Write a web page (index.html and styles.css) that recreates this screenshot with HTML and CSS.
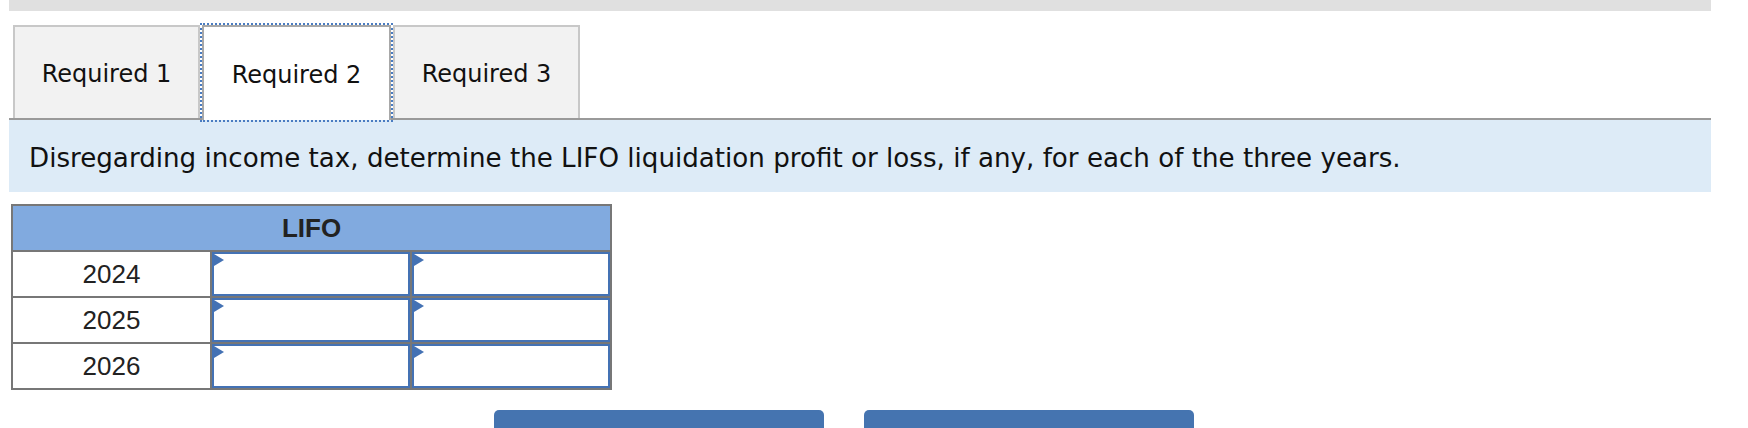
FILE: index.html
```html
<!DOCTYPE html>
<html>
<head>
<link rel="stylesheet" href="styles.css">
</head>
<body>

<div class="page">
    <div class="top-bar"></div>

    <div class="tabs">
        <div class="tab">Required 1</div>
        <div class="tab active">Required 2</div>
        <div class="tab">Required 3</div>
    </div>

    <div class="question">Disregarding income tax, determine the LIFO liquidation profit or loss, if any, for each of the three years.</div>

    <table class="answer-table">
        <tr>
            <th colspan="3">LIFO</th>
        </tr>
        <tr>
            <td class="year">2024</td>
            <td><div class="entry"><span class="marker"></span></div></td>
            <td><div class="entry"><span class="marker"></span></div></td>
        </tr>
        <tr>
            <td class="year">2025</td>
            <td><div class="entry"><span class="marker"></span></div></td>
            <td><div class="entry"><span class="marker"></span></div></td>
        </tr>
        <tr>
            <td class="year">2026</td>
            <td><div class="entry"><span class="marker"></span></div></td>
            <td><div class="entry"><span class="marker"></span></div></td>
        </tr>
    </table>

    <div class="nav-buttons">
        <div class="nav-btn"></div>
        <div class="nav-btn"></div>
    </div>
</div>

</body>
</html>
```

FILE: styles.css
```css
body {
    margin: 0;
    background-color: #fff;
    font-family: "DejaVu Sans", Verdana, sans-serif;
    color: #111;
    overflow: hidden;
}

.page {
    width: 1702px;
    margin-left: 9px;
}

.top-bar {
    height: 11px;
    background-color: #e0e0e0;
}

/* Tabs */
.tabs {
    display: flex;
    margin-top: 14px;
    padding-left: 4px;
    border-bottom: 2px solid #9a9a9a;
}

.tab {
    box-sizing: border-box;
    width: 187px;
    height: 93px;
    padding-top: 3px;
    display: flex;
    align-items: center;
    justify-content: center;
    background-color: #f2f2f2;
    border: 2px solid #c8c8c8;
    border-bottom: none;
    font-size: 24px;
}

.tab.active {
    width: 189px;
    height: 95px;
    margin: 0 2px -2px 2px;
    background-color: #fff;
    border-color: #a8a8a8;
    outline: 2px dotted #4a7cc1;
}

/* Question text */
.question {
    height: 72px;
    box-sizing: border-box;
    padding: 4px 0 0 20px;
    display: flex;
    align-items: center;
    background-color: #ddebf7;
    font-size: 26.15px;
}

/* Answer table */
.answer-table {
    margin: 12px 0 0 2px;
    border-collapse: separate;
    border-spacing: 0;
    border-top: 2px solid #777;
    border-left: 2px solid #777;
    font-family: "Liberation Sans", Arial, sans-serif;
    font-size: 26px;
    color: #222;
}

.answer-table th,
.answer-table td {
    padding: 0;
    height: 44px;
    border-right: 2px solid #777;
    border-bottom: 2px solid #777;
}

.answer-table th {
    background-color: #81aadf;
    font-weight: bold;
    text-align: center;
}

.answer-table td {
    width: 198px;
}

.answer-table td.year {
    width: 197px;
    text-align: center;
}

.entry {
    position: relative;
    box-sizing: border-box;
    height: 44px;
    border: 2px solid #4472b4;
    background-color: #fff;
}

.marker {
    position: absolute;
    top: 0;
    left: 0;
    width: 0;
    height: 0;
    border-left: 10px solid #4472b4;
    border-top: 6px solid transparent;
    border-bottom: 6px solid transparent;
}

/* Bottom navigation */
.nav-buttons {
    display: flex;
    gap: 40px;
    margin: 20px 0 0 485px;
}

.nav-btn {
    width: 330px;
    height: 56px;
    background-color: #4574b0;
    border-radius: 5px;
}
```
